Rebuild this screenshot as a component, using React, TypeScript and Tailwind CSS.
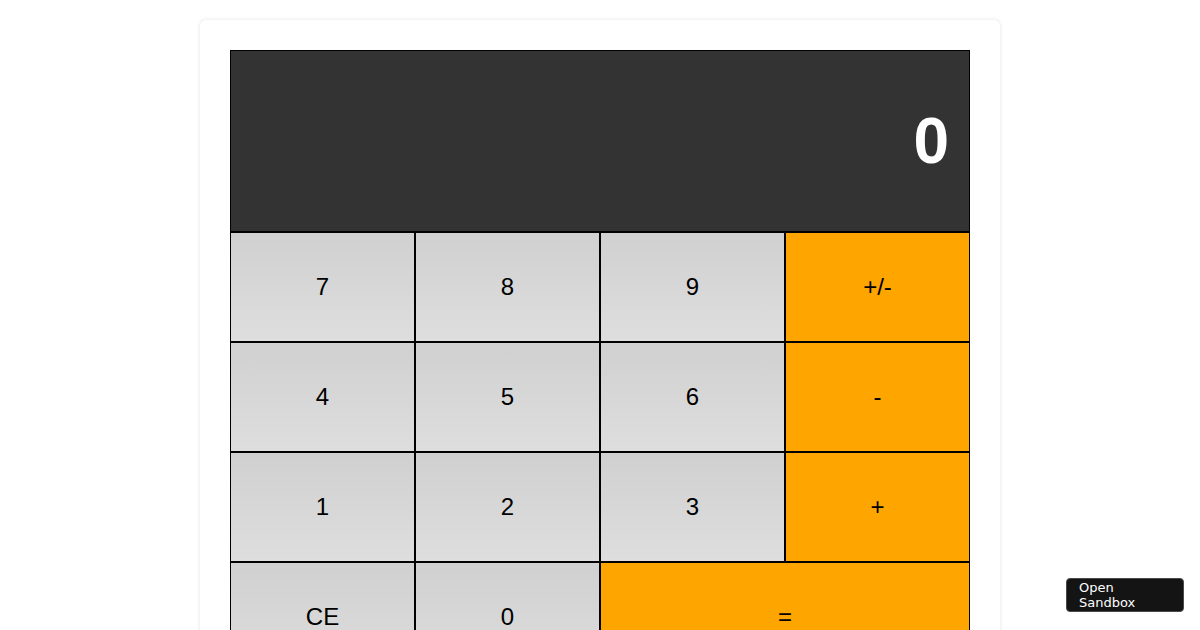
import React from 'react';

type Key = { label: string; op?: boolean; wide?: boolean };

const keys: Key[] = [
  { label: '7' }, { label: '8' }, { label: '9' }, { label: '+/-', op: true },
  { label: '4' }, { label: '5' }, { label: '6' }, { label: '-', op: true },
  { label: '1' }, { label: '2' }, { label: '3' }, { label: '+', op: true },
  { label: 'CE' }, { label: '0' }, { label: '=', op: true, wide: true },
];

const App: React.FC = () => {
  return (
    <div className="min-h-screen bg-white pt-[20px] font-['Liberation_Sans',Arial,sans-serif]">
      <div className="mx-auto w-[800px] rounded-[6px] bg-white p-[30px] shadow-[0_0_4px_rgba(0,0,0,0.12)]">
        <div className="flex h-[182px] items-center justify-end border border-black bg-[#333333] pr-[20px]">
          <span className="text-[64px] font-bold leading-none text-white">0</span>
        </div>
        <div className="grid grid-cols-4">
          {keys.map(k => (
            <button
              key={k.label}
              className={
                'flex h-[110px] items-center justify-center border border-black text-[24px] text-black ' +
                (k.op ? 'bg-[#ffa500] ' : 'bg-gradient-to-b from-[#d0d0d0] to-[#dedede] ') +
                (k.wide ? 'col-span-2' : '')
              }
            >
              {k.label}
            </button>
          ))}
        </div>
      </div>
      <div className="fixed bottom-[18px] right-[16px] flex h-[34px] w-[118px] flex-col justify-center rounded-[4px] border border-[#4a4a4a] bg-[#141414] pl-[12px] font-['DejaVu_Sans',sans-serif] text-[13px] leading-[15px] text-white">
        <span>Open</span>
        <span>Sandbox</span>
      </div>
    </div>
  );
};

export default App;
